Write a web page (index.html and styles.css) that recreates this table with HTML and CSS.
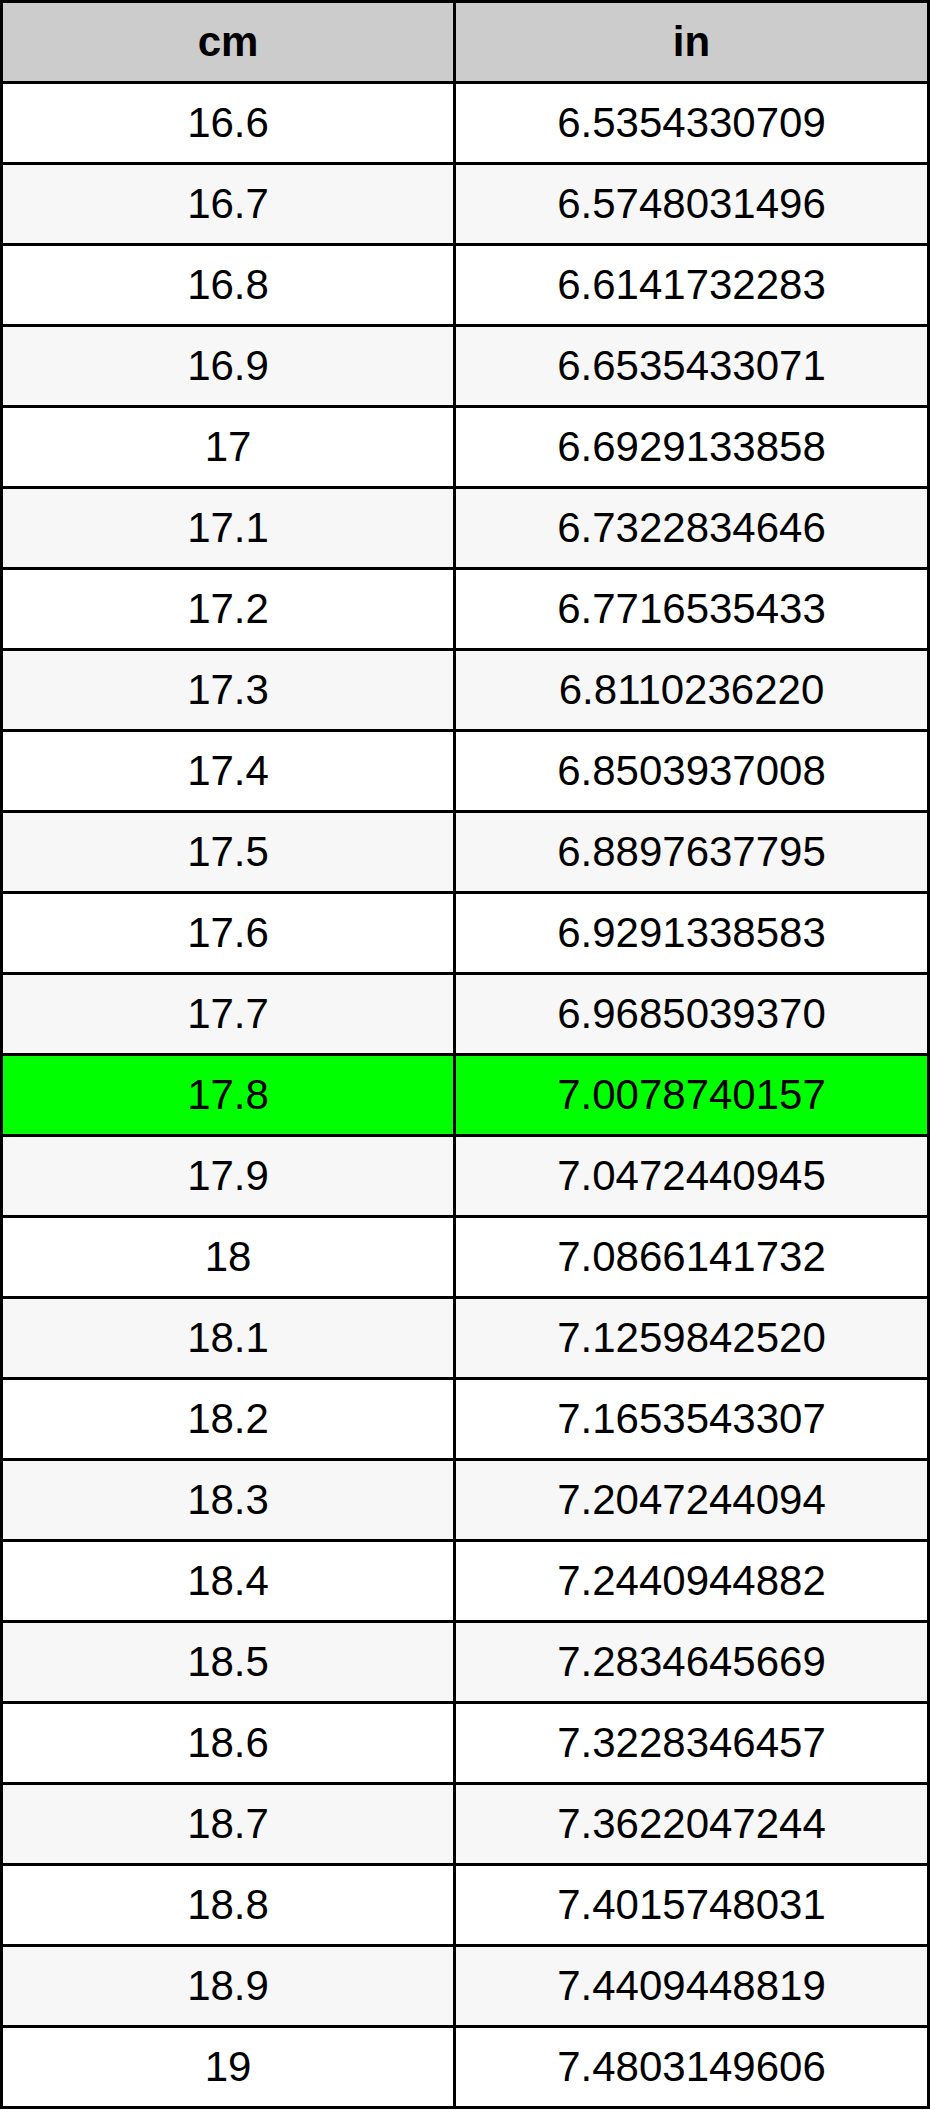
FILE: index.html
```html
<!DOCTYPE html>
<html>
<head>
<meta charset="utf-8">
<link rel="stylesheet" href="styles.css">
</head>
<body>
<table class="conv">
<thead>
<tr><th class="c1">cm</th><th class="c2">in</th></tr>
</thead>
<tbody>
<tr><td>16.6</td><td>6.5354330709</td></tr>
<tr><td>16.7</td><td>6.5748031496</td></tr>
<tr><td>16.8</td><td>6.6141732283</td></tr>
<tr><td>16.9</td><td>6.6535433071</td></tr>
<tr><td>17</td><td>6.6929133858</td></tr>
<tr><td>17.1</td><td>6.7322834646</td></tr>
<tr><td>17.2</td><td>6.7716535433</td></tr>
<tr><td>17.3</td><td>6.8110236220</td></tr>
<tr><td>17.4</td><td>6.8503937008</td></tr>
<tr><td>17.5</td><td>6.8897637795</td></tr>
<tr><td>17.6</td><td>6.9291338583</td></tr>
<tr><td>17.7</td><td>6.9685039370</td></tr>
<tr class="hl"><td>17.8</td><td>7.0078740157</td></tr>
<tr><td>17.9</td><td>7.0472440945</td></tr>
<tr><td>18</td><td>7.0866141732</td></tr>
<tr><td>18.1</td><td>7.1259842520</td></tr>
<tr><td>18.2</td><td>7.1653543307</td></tr>
<tr><td>18.3</td><td>7.2047244094</td></tr>
<tr><td>18.4</td><td>7.2440944882</td></tr>
<tr><td>18.5</td><td>7.2834645669</td></tr>
<tr><td>18.6</td><td>7.3228346457</td></tr>
<tr><td>18.7</td><td>7.3622047244</td></tr>
<tr><td>18.8</td><td>7.4015748031</td></tr>
<tr><td>18.9</td><td>7.4409448819</td></tr>
<tr><td>19</td><td>7.4803149606</td></tr>
</tbody>
</table>
</body>
</html>
```

FILE: styles.css
```css
html, body {
  margin: 0;
  padding: 0;
  background: #ffffff;
}

.conv {
  border-collapse: separate;
  border-spacing: 0;
  border-top: 3px solid #000;
  border-left: 3px solid #000;
  table-layout: fixed;
  width: 930px;
  font-family: "Liberation Sans", Arial, sans-serif;
  font-size: 42px;
  color: #000;
}

.conv th,
.conv td {
  border-right: 3px solid #000;
  border-bottom: 3px solid #000;
  height: 78px;
  padding: 0;
  text-align: center;
  vertical-align: middle;
  line-height: 78px;
  box-sizing: content-box;
}

.conv th {
  background: #cccccc;
  font-weight: bold;
}

.conv .c1 {
  width: 450px;
}

.conv .c2 {
  width: 471px;
}

.conv tbody tr:nth-child(odd) td {
  background: #ffffff;
}

.conv tbody tr:nth-child(even) td {
  background: #f7f7f7;
}

.conv tbody tr.hl td {
  background: #00ff00;
}
```
